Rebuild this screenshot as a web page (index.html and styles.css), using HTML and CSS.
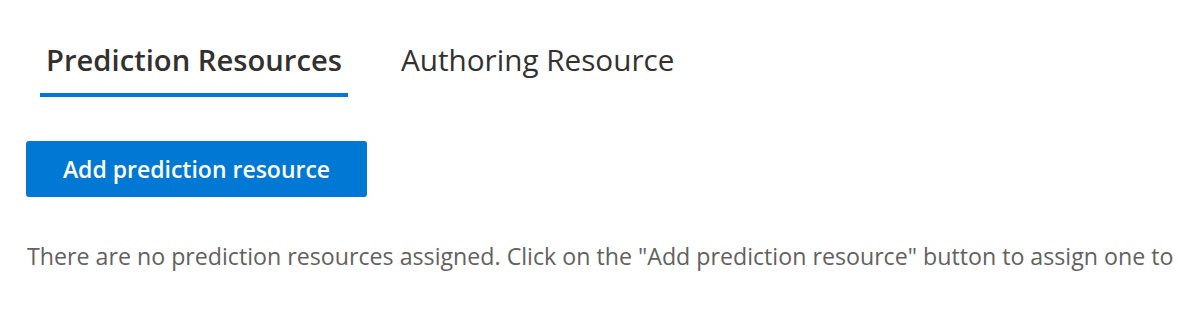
FILE: index.html
```html
<!DOCTYPE html>
<html>
<head>
<meta charset="utf-8">
<link rel="stylesheet" href="styles.css">
</head>
<body>
<div class="page">
  <div class="tabs">
    <div class="tab active">Prediction Resources</div>
    <div class="tab">Authoring Resource</div>
  </div>
  <div class="actions">
    <button class="primary">Add prediction resource</button>
  </div>
  <p class="empty">There are no prediction resources assigned. Click on the "Add prediction resource" button to assign one to</p>
</div>
</body>
</html>
```
FILE: styles.css
```css
html, body {
  margin: 0;
  padding: 0;
  background: #ffffff;
}
body {
  font-family: "Open Sans", "Noto Sans", sans-serif;
  overflow: hidden;
}
.page {
  padding: 40px 0 0 26px;
}
.tabs {
  display: flex;
  margin-left: 14px;
  gap: 47px;
}
.tab {
  font-size: 29.7px;
  line-height: 40px;
  color: #323130;
  padding: 0 6px 13px;
  border-bottom: 4px solid transparent;
}
.tab.active {
  font-size: 29.2px;
  font-weight: 600;
  border-bottom-color: #0078d4;
}
.actions {
  margin-top: 44px;
}
.primary {
  display: block;
  background: #0078d4;
  color: #ffffff;
  border: none;
  border-radius: 3px;
  width: 341px;
  height: 56px;
  font-family: inherit;
  font-size: 23px;
  font-weight: 600;
  cursor: pointer;
}
.empty {
  margin: 43px 0 0 1px;
  font-size: 23.2px;
  color: #636160;
  white-space: nowrap;
}
```
